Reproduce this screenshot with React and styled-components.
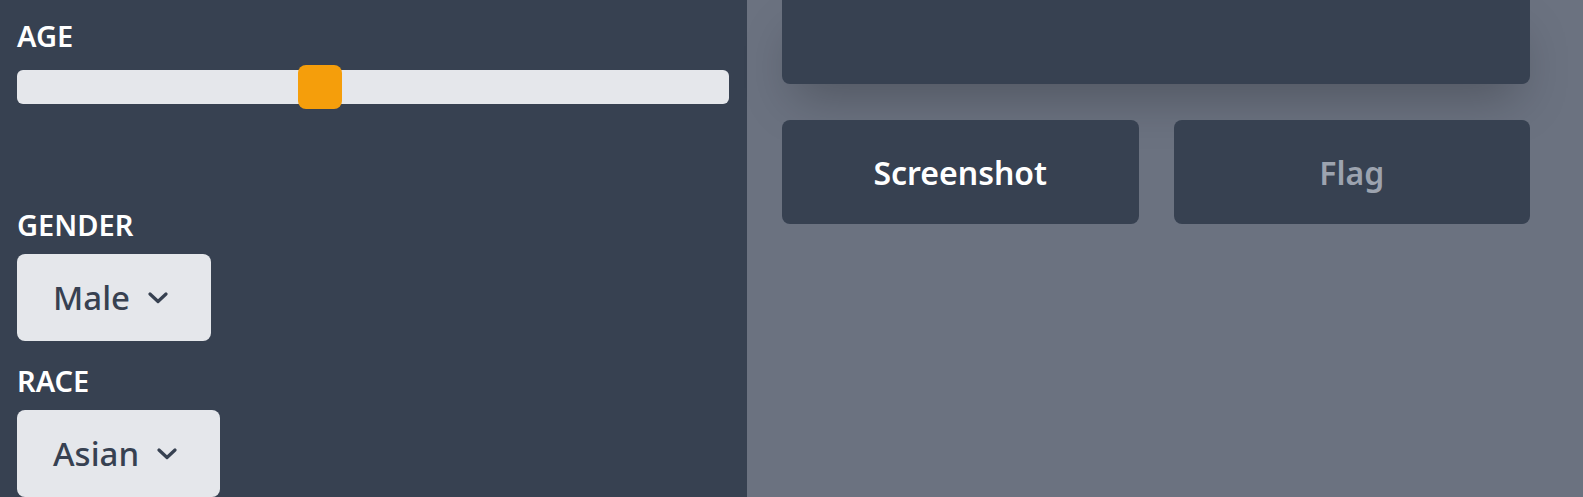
import React, { useState } from "react";
import styled, { createGlobalStyle } from "styled-components";

const GlobalStyle = createGlobalStyle`
  html, body { margin: 0; padding: 0; height: 100%; overflow: hidden; }
  body { font-family: "Noto Sans", "Open Sans", sans-serif; background: #6b7280; }
  #root { height: 100%; }
`;

const Page = styled.div`
  display: flex;
  height: 100vh;
  background: #6b7280;
`;

const Sidebar = styled.aside`
  width: 747px;
  flex: none;
  box-sizing: border-box;
  background: #374151;
  padding: 16px 18px 0 17px;
  display: flex;
  flex-direction: column;
  align-items: flex-start;
  overflow: hidden;
`;

const Label = styled.div`
  color: #ffffff;
  font-size: 29px;
  line-height: 40px;
  font-weight: 600;
  margin-top: ${(p) => p.$mt || 0}px;
  margin-bottom: 9px;
`;

const Range = styled.input`
  -webkit-appearance: none;
  appearance: none;
  width: 100%;
  height: 44px;
  margin: 0;
  padding: 0;
  background: transparent;
  cursor: pointer;

  &::-webkit-slider-runnable-track {
    height: 34px;
    background: #e5e7eb;
    border-radius: 6px;
  }
  &::-webkit-slider-thumb {
    -webkit-appearance: none;
    width: 44px;
    height: 44px;
    margin-top: -5px;
    background: #f59e0b;
    border: none;
    border-radius: 8px;
  }
  &::-moz-range-track {
    height: 34px;
    background: #e5e7eb;
    border-radius: 6px;
  }
  &::-moz-range-thumb {
    width: 44px;
    height: 44px;
    background: #f59e0b;
    border: none;
    border-radius: 8px;
  }
  &:focus { outline: none; }
`;

const Select = styled.button`
  display: flex;
  align-items: center;
  gap: 18px;
  height: 87px;
  padding: 0 43px 0 36px;
  border: none;
  border-radius: 8px;
  background: #e5e7eb;
  color: #374151;
  font-family: inherit;
  font-size: 33px;
  font-weight: 500;
  cursor: pointer;
  flex: none;
`;

const Chevron = () => (
  <svg width="20" height="12" viewBox="0 0 20 12" fill="none">
    <polyline
      points="2,2 10,9.5 18,2"
      stroke="#374151"
      strokeWidth="3.2"
      strokeLinecap="round"
      strokeLinejoin="round"
    />
  </svg>
);

const Main = styled.main`
  flex: 1;
  display: flex;
  flex-direction: column;
  gap: 36px;
  padding: 0 53px 0 35px;
`;

const Card = styled.div`
  height: 84px;
  background: #374151;
  border-radius: 0 0 8px 8px;
  box-shadow: 0 25px 50px -12px rgba(0, 0, 0, 0.25);
`;

const ButtonRow = styled.div`
  display: grid;
  grid-template-columns: 1fr 1fr;
  gap: 35px;
`;

const ActionButton = styled.button`
  height: 104px;
  border: none;
  border-radius: 8px;
  background: #374151;
  color: ${(p) => (p.$muted ? "#9ca3af" : "#ffffff")};
  font-family: inherit;
  font-size: 32px;
  font-weight: 600;
  cursor: pointer;
`;

export default function App() {
  const [age, setAge] = useState(42);
  return (
    <>
      <GlobalStyle />
      <Page>
        <Sidebar>
          <Label>AGE</Label>
          <Range
            type="range"
            min="0"
            max="100"
            value={age}
            onChange={(e) => setAge(Number(e.target.value))}
          />
          <Label $mt={97}>GENDER</Label>
          <Select>
            Male <Chevron />
          </Select>
          <Label $mt={20}>RACE</Label>
          <Select>
            Asian <Chevron />
          </Select>
        </Sidebar>
        <Main>
          <Card />
          <ButtonRow>
            <ActionButton>Screenshot</ActionButton>
            <ActionButton $muted>Flag</ActionButton>
          </ButtonRow>
        </Main>
      </Page>
    </>
  );
}
